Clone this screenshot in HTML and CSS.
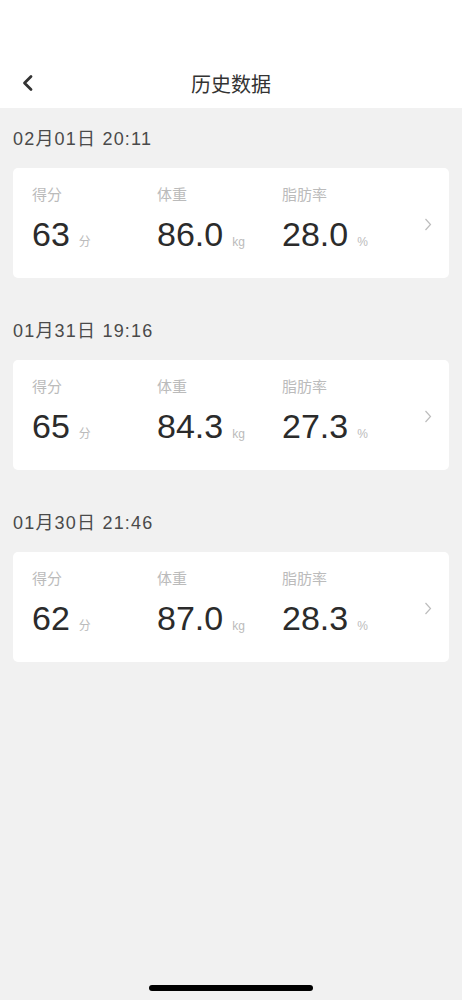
FILE: index.html
```html
<!DOCTYPE html>
<html lang="zh-CN">
<head>
  <meta charset="utf-8">
  <title>历史数据</title>
  <link rel="stylesheet" href="styles.css">
</head>
<body>
  <!-- 顶部导航 -->
  <div class="header">
    <div class="nav">
      <span class="back">
        <svg width="14" height="18" viewBox="0 0 14 18"><path d="M10 2.5 L3.5 9 L10 15.5" fill="none" stroke="#333" stroke-width="2.8" stroke-linecap="round" stroke-linejoin="round"/></svg>
      </span>
      <span class="title">历史数据</span>
    </div>
  </div>

  <!-- 记录列表 -->
  <div class="list">
    <div class="group">
      <div class="date">02月01日 20:11</div>
      <div class="card">
        <div class="col">
          <div class="label">得分</div>
          <div class="value">63<span class="unit">分</span></div>
        </div>
        <div class="col">
          <div class="label">体重</div>
          <div class="value">86.0<span class="unit">kg</span></div>
        </div>
        <div class="col">
          <div class="label">脂肪率</div>
          <div class="value">28.0<span class="unit">%</span></div>
        </div>
        <span class="arrow"><svg width="8" height="13" viewBox="0 0 8 13"><path d="M1.5 1 L6.5 6.5 L1.5 12" fill="none" stroke="#bdbdbd" stroke-width="1.2"/></svg></span>
      </div>
    </div>

    <div class="group">
      <div class="date">01月31日 19:16</div>
      <div class="card">
        <div class="col">
          <div class="label">得分</div>
          <div class="value">65<span class="unit">分</span></div>
        </div>
        <div class="col">
          <div class="label">体重</div>
          <div class="value">84.3<span class="unit">kg</span></div>
        </div>
        <div class="col">
          <div class="label">脂肪率</div>
          <div class="value">27.3<span class="unit">%</span></div>
        </div>
        <span class="arrow"><svg width="8" height="13" viewBox="0 0 8 13"><path d="M1.5 1 L6.5 6.5 L1.5 12" fill="none" stroke="#bdbdbd" stroke-width="1.2"/></svg></span>
      </div>
    </div>

    <div class="group">
      <div class="date">01月30日 21:46</div>
      <div class="card">
        <div class="col">
          <div class="label">得分</div>
          <div class="value">62<span class="unit">分</span></div>
        </div>
        <div class="col">
          <div class="label">体重</div>
          <div class="value">87.0<span class="unit">kg</span></div>
        </div>
        <div class="col">
          <div class="label">脂肪率</div>
          <div class="value">28.3<span class="unit">%</span></div>
        </div>
        <span class="arrow"><svg width="8" height="13" viewBox="0 0 8 13"><path d="M1.5 1 L6.5 6.5 L1.5 12" fill="none" stroke="#bdbdbd" stroke-width="1.2"/></svg></span>
      </div>
    </div>
  </div>

  <div class="home-bar"></div>
</body>
</html>
```

FILE: styles.css
```css
html, body {
  height: 100%;
}

body {
  margin: 0;
  background: #f1f1f1;
  font-family: "Liberation Sans", "Noto Sans CJK SC", sans-serif;
  color: #333;
}

.header {
  background: #fff;
  padding-top: 58px;
}

.nav {
  height: 50px;
  display: flex;
  align-items: center;
  justify-content: center;
  position: relative;
}

.back {
  position: absolute;
  left: 21px;
  top: 16px;
  display: flex;
}

.title {
  font-size: 20px;
  color: #333;
}

.list {
  padding: 0 13px;
}

.group {
  margin-bottom: 22px;
}

.date {
  height: 60px;
  line-height: 62px;
  font-size: 18px;
  letter-spacing: 1.2px;
  color: #4a4a4a;
}

.card {
  height: 110px;
  background: #fff;
  border-radius: 5px;
  display: flex;
  align-items: center;
  padding-left: 19px;
  position: relative;
}

.col {
  width: 125px;
}

.label {
  font-size: 15px;
  line-height: 20px;
  color: #bbb;
}

.value {
  margin-top: 9px;
  font-size: 34px;
  line-height: 40px;
  color: #2b2b2b;
}

.unit {
  font-size: 12px;
  color: #bbb;
  margin-left: 9px;
}

.arrow {
  position: absolute;
  right: 17px;
  top: 50px;
  display: flex;
}

.home-bar {
  position: fixed;
  left: 149px;
  bottom: 9px;
  width: 164px;
  height: 6px;
  border-radius: 3px;
  background: #000;
}
```
